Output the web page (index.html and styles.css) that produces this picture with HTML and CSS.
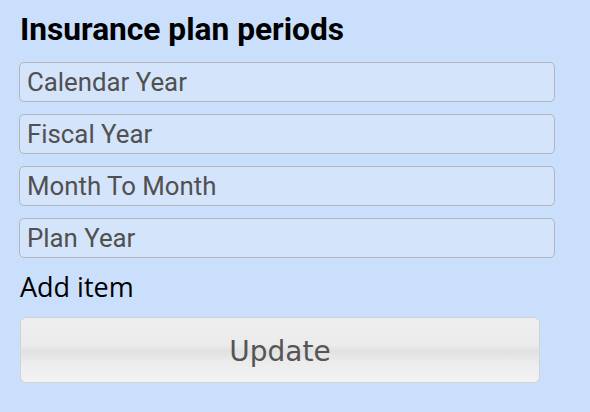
FILE: index.html
```html
<!DOCTYPE html>
<html>
<head>
<meta charset="utf-8">
<link rel="stylesheet" href="styles.css">
</head>
<body>
<div class="panel">
  <h1 class="title">Insurance plan periods</h1>
  <div class="list">
    <input class="field" type="text" value="Calendar Year">
    <input class="field" type="text" value="Fiscal Year">
    <input class="field" type="text" value="Month To Month">
    <input class="field" type="text" value="Plan Year">
  </div>
  <div class="add">Add item</div>
  <button class="update" type="button">Update</button>
</div>
</body>
</html>
```

FILE: styles.css
```css
html, body {
  margin: 0;
  padding: 0;
  background: #c9dffc;
}
.panel {
  padding: 11px 0 0 19px;
  width: 536px;
  display: flex;
  flex-direction: column;
}
.title {
  margin: 0 0 13px 1px;
  font-family: Roboto, "Liberation Sans", sans-serif;
  font-weight: 700;
  font-size: 31.7px;
  line-height: 38px;
  color: #000;
}
.list {
  display: flex;
  flex-direction: column;
  gap: 12px;
}
.field {
  box-sizing: border-box;
  width: 536px;
  height: 40px;
  margin: 0;
  padding: 0 7px;
  border: 1px solid #b3b6bb;
  border-radius: 5px;
  background: #d4e4fb;
  font-family: Roboto, "Liberation Sans", sans-serif;
  font-size: 25.8px;
  color: #505050;
  outline: none;
}
.add {
  margin: 14px 0 0 1px;
  font-family: "Open Sans", sans-serif;
  font-size: 27px;
  line-height: 30px;
  color: #000;
}
.update {
  box-sizing: border-box;
  margin: 15px 0 0 1px;
  width: 520px;
  height: 66px;
  border: 1px solid #d2d2d2;
  border-radius: 6px;
  background: linear-gradient(#eeeeee 0%, #ebebeb 42%, #e1e1e1 52%, #ececec 70%, #f3f3f3 100%);
  font-family: "DejaVu Sans", sans-serif;
  font-size: 28px;
  color: #555;
  padding: 3px 0 0;
}
```
